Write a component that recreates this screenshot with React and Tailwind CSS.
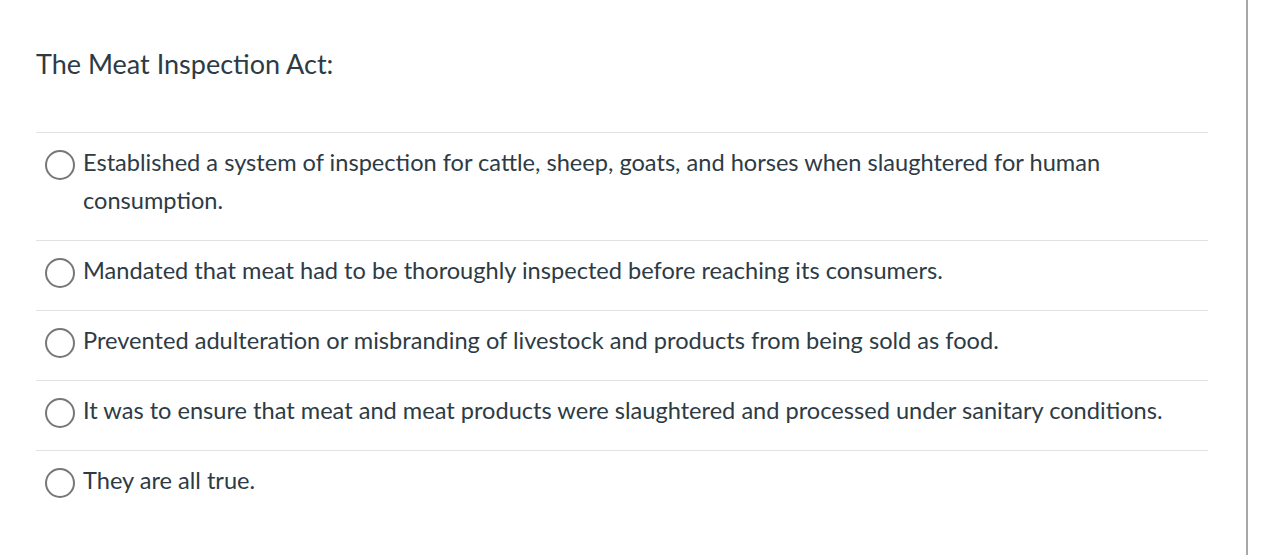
export default function App() {
  const options = [
    "Established a system of inspection for cattle, sheep, goats, and horses when slaughtered for human consumption.",
    "Mandated that meat had to be thoroughly inspected before reaching its consumers.",
    "Prevented adulteration or misbranding of livestock and products from being sold as food.",
    "It was to ensure that meat and meat products were slaughtered and processed under sanitary conditions.",
    "They are all true.",
  ];

  return (
    <div className="flex h-[555px] w-[1274px] bg-white font-['Lato','Noto_Sans',sans-serif] text-[#2d3b45]">
      <div className="w-[1246px] pl-9 pr-[38px]">
        <div className="pt-[46px] pb-[50px] text-[27px] leading-[36px]">The Meat Inspection Act:</div>
        <div>
          {options.map((o, i) => (
            <div key={i} className="flex border-t border-[#e2e2e2] pt-[9.5px] pb-[21.5px] pl-[9px] pr-10">
              <span className="mt-[7.5px] mr-[8px] h-[30px] w-[30px] shrink-0 rounded-full border-2 border-[#777]" />
              <span className="text-[23.6px] leading-[38px]">{o}</span>
            </div>
          ))}
        </div>
      </div>
      <div className="h-full w-[2px] bg-[#a8a8a8]" />
    </div>
  );
}
